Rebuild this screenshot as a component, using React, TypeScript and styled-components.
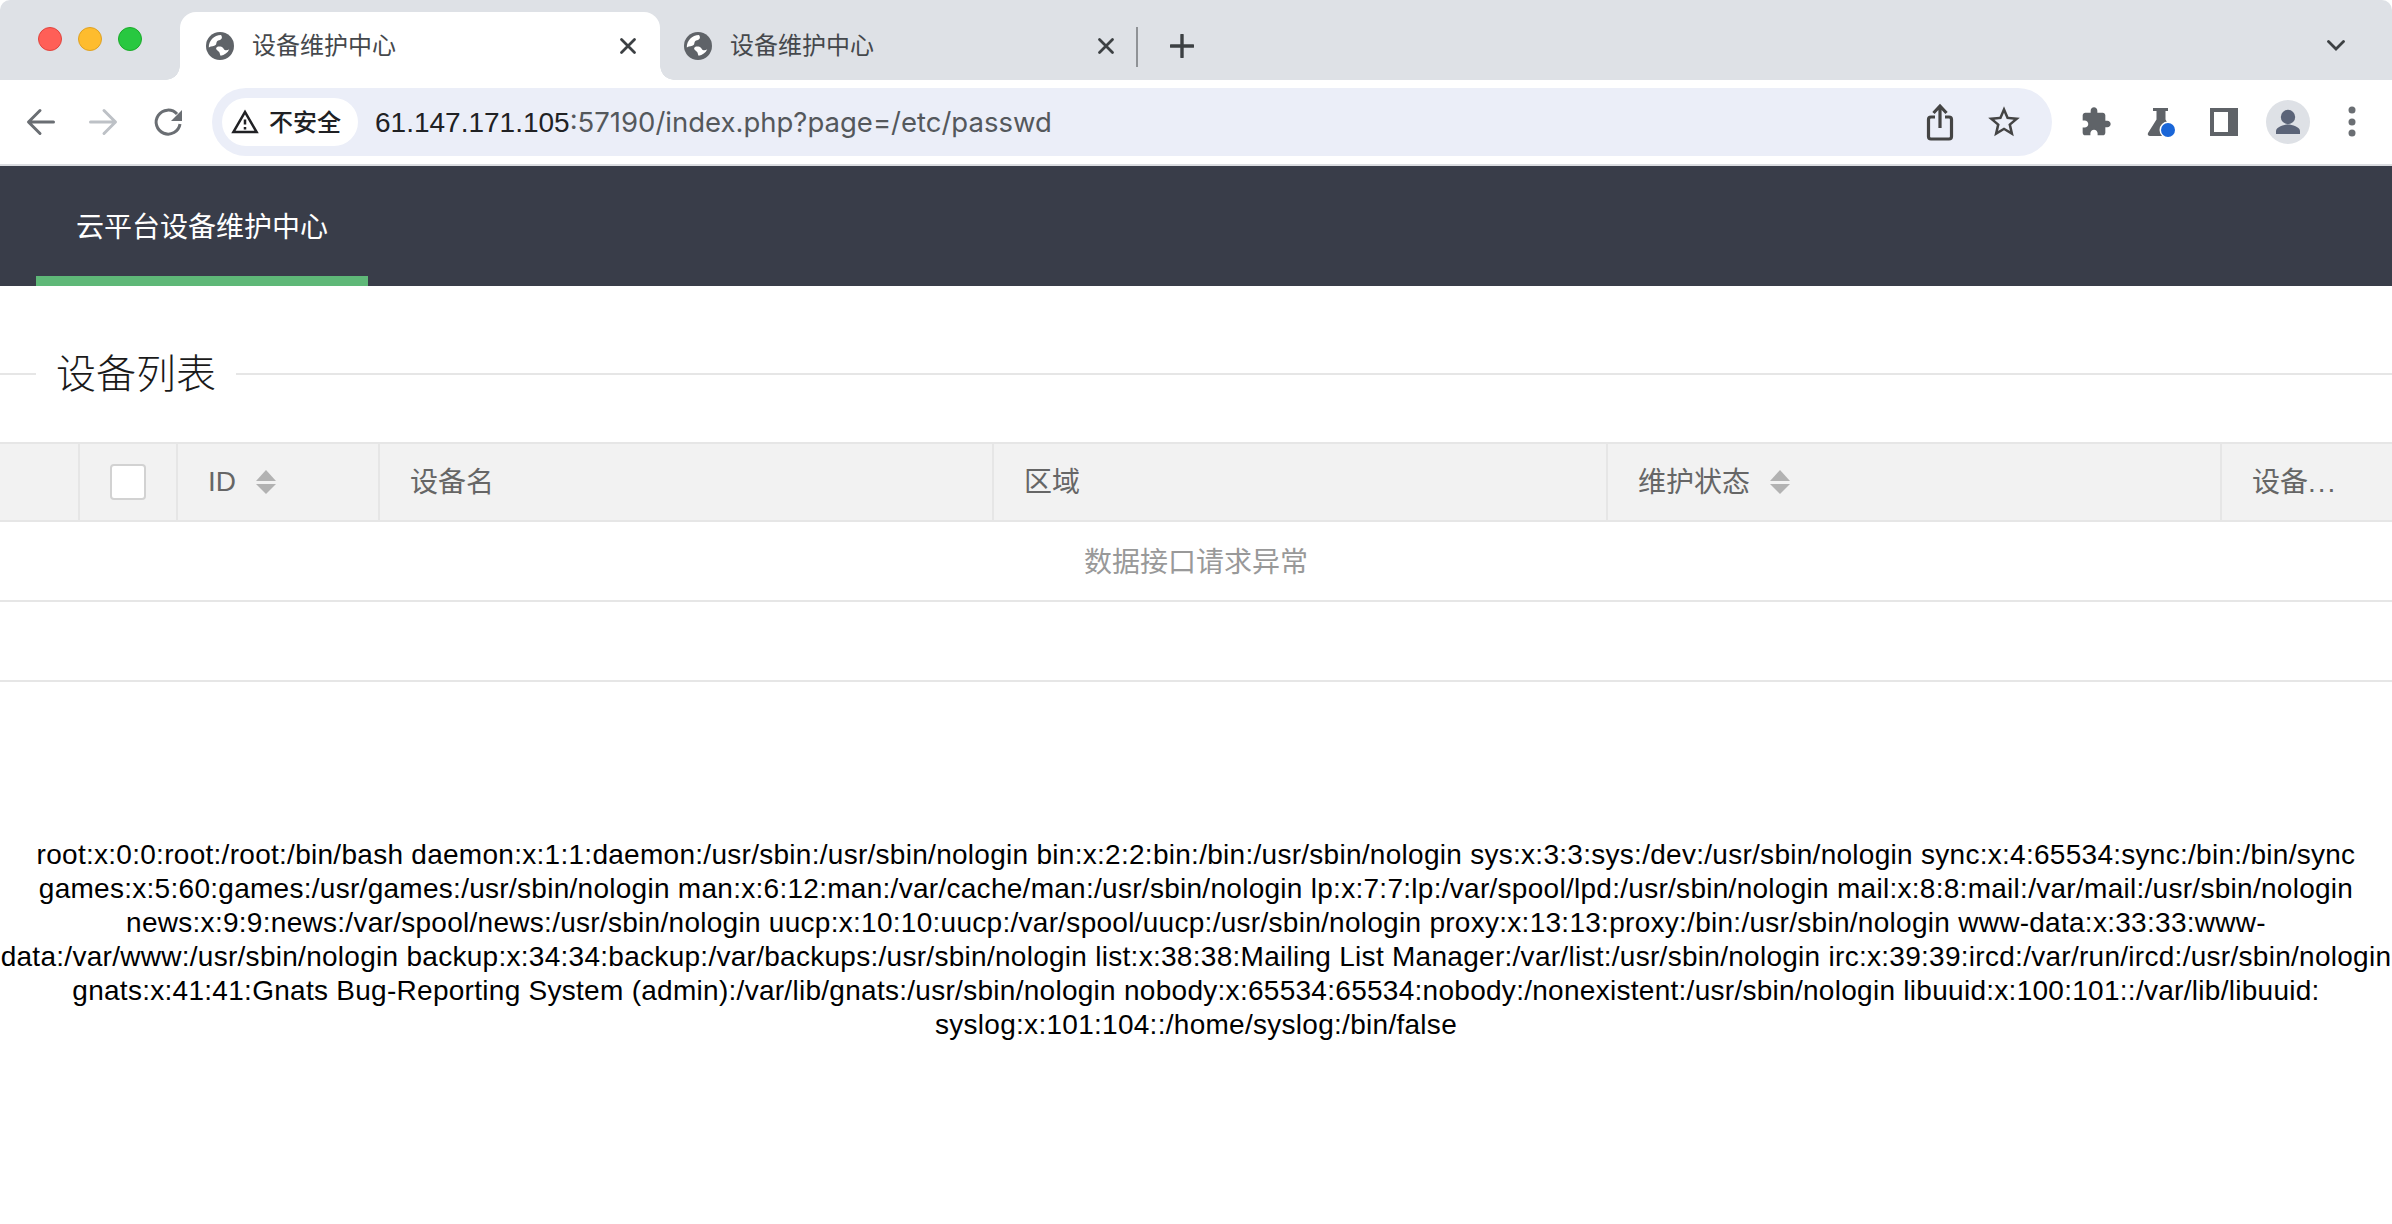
import React from "react";
import styled, { createGlobalStyle } from "styled-components";

const CJK = `"Liberation Sans", "Noto Sans CJK SC", sans-serif`;

const Global = createGlobalStyle`
  html, body { margin: 0; padding: 0; background: #fff; overflow: hidden; }
  body { font-family: ${CJK}; width: 2392px; height: 1224px; }
`;

const Page = styled.div`
  width: 2392px;
  height: 1224px;
  overflow: hidden;
  display: flex;
  flex-direction: column;
`;

const TabStrip = styled.div`
  height: 80px;
  flex: none;
  background: #dee1e6;
  border-radius: 10px 10px 0 0;
  display: flex;
  align-items: flex-end;
  position: relative;
`;

const Lights = styled.div`
  width: 180px;
  flex: none;
  align-self: flex-start;
  padding: 27px 0 0 38px;
  box-sizing: border-box;
  display: flex;
  gap: 16px;
`;

const Light = styled.span<{ $c: string; $b: string }>`
  width: 24px;
  height: 24px;
  box-sizing: border-box;
  border-radius: 50%;
  background: ${(p) => p.$c};
  border: 1px solid ${(p) => p.$b};
`;

const Tab = styled.div<{ $active?: boolean }>`
  height: 68px;
  box-sizing: border-box;
  width: ${(p) => (p.$active ? 480 : 476)}px;
  padding: 0 ${(p) => (p.$active ? 22 : 20)}px 0 ${(p) => (p.$active ? 26 : 24)}px;
  display: flex;
  align-items: center;
  position: relative;
  background: ${(p) => (p.$active ? "#fff" : "transparent")};
  border-radius: 16px 16px 0 0;
  color: #45484c;
  font-size: 24px;
  ${(p) =>
    p.$active
      ? `
    &::before, &::after {
      content: "";
      position: absolute;
      bottom: 0;
      width: 14px;
      height: 14px;
    }
    &::before { left: -14px; background: radial-gradient(circle at 0 0, transparent 13.5px, #fff 14px); }
    &::after { right: -14px; background: radial-gradient(circle at 100% 0, transparent 13.5px, #fff 14px); }
  `
      : ""}
`;

const TabTitle = styled.span`
  margin-left: 18px;
  line-height: 30px;
`;

const TabClose = styled.svg`
  margin-left: auto;
  width: 20px;
  height: 20px;
  flex: none;
`;

const TabDivider = styled.span`
  width: 2px;
  height: 40px;
  align-self: flex-start;
  margin-top: 27px;
  background: #8f9296;
  flex: none;
`;

const NewTab = styled.svg`
  align-self: flex-start;
  margin: 34px 0 0 32px;
  width: 24px;
  height: 24px;
  flex: none;
`;

const TabMenu = styled.svg`
  align-self: flex-start;
  margin: 39px 47px 0 auto;
  width: 18px;
  height: 14px;
  flex: none;
`;

const Toolbar = styled.div`
  height: 86px;
  flex: none;
  box-sizing: border-box;
  background: #fff;
  border-bottom: 2px solid #dadce0;
  padding: 0 8px;
  display: flex;
  align-items: center;
`;

const IconButton = styled.div`
  width: 64px;
  height: 64px;
  flex: none;
  display: flex;
  align-items: center;
  justify-content: center;
`;

const Omnibox = styled.div`
  flex: 1;
  height: 68px;
  margin: 0 12px;
  border-radius: 34px;
  background: #ebeef8;
  display: flex;
  align-items: center;
  padding: 0 16px 0 10px;
  min-width: 0;
`;

const SecurityChip = styled.div`
  width: 136px;
  height: 48px;
  box-sizing: border-box;
  padding-left: 8px;
  border-radius: 24px;
  background: #fff;
  display: flex;
  align-items: center;
  gap: 9px;
  font-size: 24px;
  font-weight: 500;
  color: #202124;
  flex: none;
`;

const ChipLabel = styled.span`
  position: relative;
  top: -2px;
`;

const Url = styled.div`
  margin-left: 17px;
  flex: 1;
  font-family: Inter, "Liberation Sans", sans-serif;
  font-size: 27.5px;
  color: #54585c;
  white-space: nowrap;
`;

const Host = styled.span`
  font-family: "Liberation Sans", sans-serif;
  font-size: 28px;
  color: #202124;
`;

const Nav = styled.div`
  height: 120px;
  flex: none;
  background: #393d49;
  padding-left: 36px;
  display: flex;
`;

const NavItem = styled.div`
  width: 332px;
  box-sizing: border-box;
  padding-left: 40px;
  padding-top: 8px;
  border-bottom: 10px solid #5fb878;
  color: #fff;
  font-size: 28px;
  display: flex;
  align-items: center;
`;

const TitleRow = styled.div`
  margin-top: 58px;
  height: 60px;
  flex: none;
  display: flex;
  align-items: center;
`;

const TitleRule = styled.span<{ $w?: number }>`
  height: 2px;
  background: #e6e6e6;
  flex: ${(p) => (p.$w ? `0 0 ${p.$w}px` : "1")};
`;

const Title = styled.h2`
  margin: 0;
  padding: 0 20px;
  font-size: 40px;
  font-weight: 300;
  color: #1a1a1a;
  line-height: 60px;
`;

const Table = styled.div`
  margin-top: 38px;
  flex: none;
  border-top: 2px solid #e6e6e6;
`;

const HeadRow = styled.div`
  display: grid;
  grid-template-columns: 80px 98px 202px 614px 614px 614px 170px;
  height: 78px;
  box-sizing: border-box;
  background: #f2f2f2;
  border-bottom: 2px solid #e6e6e6;
`;

const HeadCell = styled.div<{ $center?: boolean }>`
  box-sizing: border-box;
  border-right: 2px solid #e6e6e6;
  padding: 0 ${(p) => (p.$center ? 0 : 30)}px;
  font-size: 28px;
  color: #666;
  display: flex;
  align-items: center;
  justify-content: ${(p) => (p.$center ? "center" : "flex-start")};
  white-space: nowrap;
  &:last-child {
    border-right: none;
  }
`;

const HeadLabel = styled.span`
  position: relative;
  top: -2px;
`;

const Dots = styled.span`
  letter-spacing: 2px;
`;

const Check = styled.span`
  width: 36px;
  height: 36px;
  box-sizing: border-box;
  background: #fff;
  border: 2px solid #d2d2d2;
  border-radius: 4px;
`;

const Sort = styled.svg`
  width: 20px;
  height: 26px;
  margin-left: 20px;
  flex: none;
`;

const Row = styled.div`
  height: 80px;
  box-sizing: border-box;
  padding-bottom: 2px;
  border-bottom: 2px solid #e6e6e6;
  color: #999;
  font-size: 28px;
  display: flex;
  align-items: center;
  justify-content: center;
`;

const Output = styled.div`
  margin-top: 156px;
  flex: none;
  display: flex;
  flex-direction: column;
  align-items: center;
  font-size: 28px;
  line-height: 34px;
  letter-spacing: 0.28px;
  color: #000;
`;

const OutputLine = styled.div`
  white-space: nowrap;
  flex: none;
`;

const lines = [
  "root:x:0:0:root:/root:/bin/bash daemon:x:1:1:daemon:/usr/sbin:/usr/sbin/nologin bin:x:2:2:bin:/bin:/usr/sbin/nologin sys:x:3:3:sys:/dev:/usr/sbin/nologin sync:x:4:65534:sync:/bin:/bin/sync",
  "games:x:5:60:games:/usr/games:/usr/sbin/nologin man:x:6:12:man:/var/cache/man:/usr/sbin/nologin lp:x:7:7:lp:/var/spool/lpd:/usr/sbin/nologin mail:x:8:8:mail:/var/mail:/usr/sbin/nologin",
  "news:x:9:9:news:/var/spool/news:/usr/sbin/nologin uucp:x:10:10:uucp:/var/spool/uucp:/usr/sbin/nologin proxy:x:13:13:proxy:/bin:/usr/sbin/nologin www-data:x:33:33:www-",
  "data:/var/www:/usr/sbin/nologin backup:x:34:34:backup:/var/backups:/usr/sbin/nologin list:x:38:38:Mailing List Manager:/var/list:/usr/sbin/nologin irc:x:39:39:ircd:/var/run/ircd:/usr/sbin/nologin",
  "gnats:x:41:41:Gnats Bug-Reporting System (admin):/var/lib/gnats:/usr/sbin/nologin nobody:x:65534:65534:nobody:/nonexistent:/usr/sbin/nologin libuuid:x:100:101::/var/lib/libuuid:",
  "syslog:x:101:104::/home/syslog:/bin/false",
];

const Globe = () => (
  <svg width="28" height="28" viewBox="0 0 28 28" style={{ flex: "none" }}>
    <circle cx="14" cy="14" r="14" fill="#5f6368" />
    <path
      d="M2.800 15.500C2.500 8.800 8 3 15 2.900c1 1.100 1.200 2.700.5 3.900-1.200 1.700-3.300 1.300-4.400 2.500-1 1.100-.5 2.700-1.500 3.800-1.600 1.600-4.100.9-6.800 2.400z"
      fill="#fff"
    />
    <path
      d="M11 15c2.400-1 4.800-.3 5.900.8.900 1.100 1.100 2.300 2.800 2.500 1.400.1 2.500-.3 3.600-1-1.600 3.500-4.800 5.900-8.700 6.500-.8-1.300-.7-2.600-1.500-3.700-.9-1.200-2.500-1.700-2.900-3-.2-.9.100-1.600.8-2.100z"
      fill="#fff"
    />
  </svg>
);

const Close = () => (
  <TabClose viewBox="0 0 20 20">
    <path d="M3.500 3.500l13 13M16.500 3.500l-13 13" stroke="#3c4043" strokeWidth="2.800" strokeLinecap="round" />
  </TabClose>
);

const Caret = () => (
  <Sort viewBox="0 0 20 26">
    <path d="M10 1l10 11H0z" fill="#b2b2b2" />
    <path d="M0 15h20L10 25z" fill="#b2b2b2" />
  </Sort>
);

export default function App() {
  return (
    <Page>
      <Global />
      <TabStrip>
        <Lights>
          <Light $c="#ff5f57" $b="#e0443e" />
          <Light $c="#febc2e" $b="#dea123" />
          <Light $c="#28c840" $b="#1aab29" />
        </Lights>
        <Tab $active>
          <Globe />
          <TabTitle>设备维护中心</TabTitle>
          <Close />
        </Tab>
        <Tab>
          <Globe />
          <TabTitle>设备维护中心</TabTitle>
          <Close />
        </Tab>
        <TabDivider />
        <NewTab viewBox="0 0 24 24">
          <path d="M12 1v22M1 12h22" stroke="#3c4043" strokeWidth="3.400" strokeLinecap="round" />
        </NewTab>
        <TabMenu viewBox="0 0 18 14">
          <path d="M1.500 2.500L9 10l7.500-7.500" fill="none" stroke="#3c4043" strokeWidth="2.800" strokeLinecap="round" />
        </TabMenu>
      </TabStrip>

      <Toolbar>
        <IconButton>
          <svg width="32" height="32" viewBox="0 0 32 32">
            <path
              d="M29.500 16H5M16 4.500L4.500 16 16 27.500"
              fill="none"
              stroke="#6a6e73"
              strokeWidth="3"
              strokeLinecap="round"
              strokeLinejoin="round"
            />
          </svg>
        </IconButton>
        <IconButton>
          <svg width="32" height="32" viewBox="0 0 32 32">
            <path
              d="M2.500 16H27M16 4.500L27.500 16 16 27.500"
              fill="none"
              stroke="#bdc1c6"
              strokeWidth="3"
              strokeLinecap="round"
              strokeLinejoin="round"
            />
          </svg>
        </IconButton>
        <IconButton>
          <svg width="32" height="32" viewBox="0 0 32 32">
            <path d="M25 8A12 12 0 1 0 28 18" fill="none" stroke="#6a6e73" strokeWidth="3" />
            <path d="M30 4v11H19z" fill="#6a6e73" />
          </svg>
        </IconButton>
        <Omnibox>
          <SecurityChip>
            <svg width="30" height="30" viewBox="0 0 24 24" style={{ flex: "none" }}>
              <path fill="#202124" d="M1 21h22L12 2 1 21zm3.470-2L12 5.990 19.530 19H4.470zM11 16h2v2h-2zm0-6h2v4h-2z" />
            </svg>
            <ChipLabel>不安全</ChipLabel>
          </SecurityChip>
          <Url>
            <Host>61.147.171.105</Host>:57190/index.php?page=/etc/passwd
          </Url>
          <IconButton>
            <svg width="28" height="38" viewBox="0 0 28 38">
              <path
                d="M9 14H5a2.500 2.500 0 0 0-2.500 2.500v17A2.500 2.500 0 0 0 5 36h18a2.500 2.500 0 0 0 2.500-2.500v-17A2.500 2.500 0 0 0 23 14h-4"
                fill="none"
                stroke="#444"
                strokeWidth="3.200"
              />
              <path d="M14 25V4M7.500 10L14 3l6.500 7" fill="none" stroke="#444" strokeWidth="3.200" />
            </svg>
          </IconButton>
          <IconButton>
            <svg width="38" height="38" viewBox="0 0 24 24">
              <path
                fill="#444"
                d="M22 9.240l-7.190-.62L12 2 9.190 8.630 2 9.240l5.460 4.730L5.820 21 12 17.270 18.180 21l-1.630-7.030L22 9.240zM12 15.400l-3.760 2.270 1-4.280-3.320-2.880 4.380-.38L12 6.100l1.710 4.040 4.380.38-3.320 2.880 1 4.280L12 15.400z"
              />
            </svg>
          </IconButton>
        </Omnibox>
        <IconButton>
          <svg width="32" height="32" viewBox="0 0 24 24">
            <path
              fill="#5f6368"
              d="M20.500 11H19V7c0-1.100-.9-2-2-2h-4V3.500C13 2.120 11.880 1 10.500 1S8 2.120 8 3.500V5H4c-1.100 0-1.990.9-1.990 2v3.800H3.500c1.490 0 2.700 1.210 2.700 2.700s-1.210 2.700-2.700 2.700H2V20c0 1.100.9 2 2 2h3.800v-1.500c0-1.490 1.210-2.700 2.700-2.700 1.490 0 2.700 1.210 2.700 2.700V22H17c1.100 0 2-.9 2-2v-4h1.500c1.380 0 2.500-1.120 2.500-2.500S21.880 11 20.500 11z"
            />
          </svg>
        </IconButton>
        <IconButton>
          <svg width="32" height="32" viewBox="0 0 32 32">
            <path fill="#5f6368" d="M9 2h15v3h-2.500v8.500L29 27c.8 1.600-.2 3-2 3H6c-1.800 0-2.800-1.400-2-3l8.500-13.500V5H9z" />
            <circle cx="24" cy="24" r="8.500" fill="#fff" />
            <circle cx="24" cy="24" r="7" fill="#1a66d8" />
          </svg>
        </IconButton>
        <IconButton>
          <svg width="28" height="28" viewBox="0 0 28 28">
            <path fill="#5f6368" fillRule="evenodd" d="M0 0h28v28H0zM4 4v20h14V4z" />
          </svg>
        </IconButton>
        <IconButton>
          <svg width="44" height="44" viewBox="0 0 44 44">
            <circle cx="22" cy="22" r="22" fill="#dee1e6" />
            <circle cx="22" cy="17" r="7.200" fill="#5b6478" />
            <path d="M10 34v-3c0-4 8-6.500 12-6.500S34 27 34 31v3z" fill="#5b6478" />
          </svg>
        </IconButton>
        <IconButton>
          <svg width="8" height="32" viewBox="0 0 8 32">
            <circle cx="4" cy="4" r="3.500" fill="#6a6e73" />
            <circle cx="4" cy="16" r="3.500" fill="#6a6e73" />
            <circle cx="4" cy="27" r="3.500" fill="#6a6e73" />
          </svg>
        </IconButton>
      </Toolbar>

      <Nav>
        <NavItem>云平台设备维护中心</NavItem>
      </Nav>

      <TitleRow>
        <TitleRule $w={36} />
        <Title>设备列表</Title>
        <TitleRule />
      </TitleRow>

      <Table>
        <HeadRow>
          <HeadCell />
          <HeadCell $center>
            <Check />
          </HeadCell>
          <HeadCell>
            ID
            <Caret />
          </HeadCell>
          <HeadCell>
            <HeadLabel>设备名</HeadLabel>
          </HeadCell>
          <HeadCell>
            <HeadLabel>区域</HeadLabel>
          </HeadCell>
          <HeadCell>
            <HeadLabel>维护状态</HeadLabel>
            <Caret />
          </HeadCell>
          <HeadCell>
            <HeadLabel>
              设备<Dots>...</Dots>
            </HeadLabel>
          </HeadCell>
        </HeadRow>
        <Row>数据接口请求异常</Row>
        <Row />
      </Table>

      <Output>
        {lines.map((l) => (
          <OutputLine key={l}>{l}</OutputLine>
        ))}
      </Output>
    </Page>
  );
}
